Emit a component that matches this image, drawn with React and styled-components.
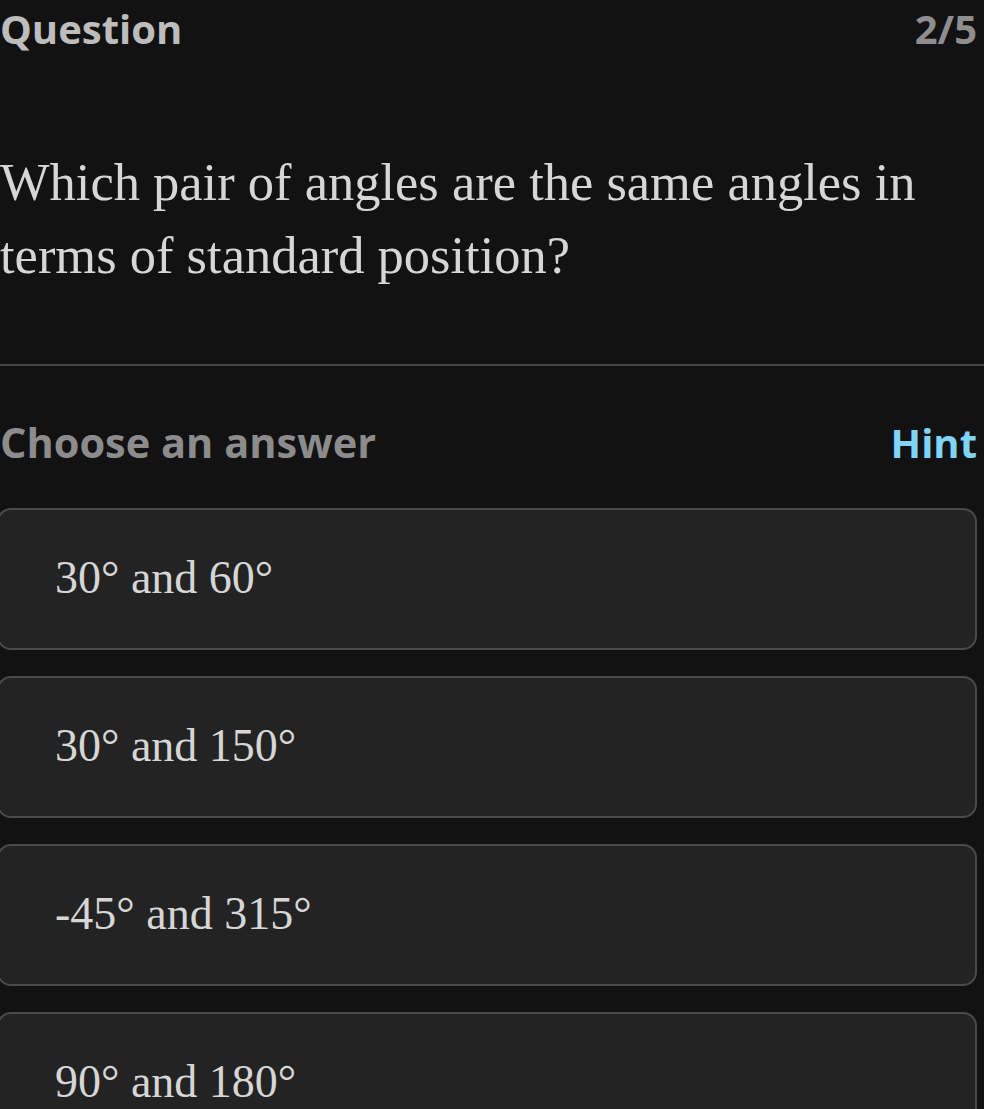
import React from "react";
import styled, { createGlobalStyle } from "styled-components";

const GlobalStyle = createGlobalStyle`
  html, body {
    margin: 0;
    padding: 0;
    background: #121212;
  }
  body {
    font-family: "Open Sans", "Noto Sans", sans-serif;
    overflow: hidden;
  }
`;

const options = [
  "30° and 60°",
  "30° and 150°",
  "-45° and 315°",
  "90° and 180°",
];

const App = () => {
  return (
    <>
      <GlobalStyle />
      <Page>
        <Header>
          <Title>Question</Title>
          <Counter>2/5</Counter>
        </Header>
        <Prompt>
          Which pair of angles are the same angles in terms of standard
          position?
        </Prompt>
        <Divider />
        <AnswerBar>
          <AnswerLabel>Choose an answer</AnswerLabel>
          <HintButton>Hint</HintButton>
        </AnswerBar>
        <OptionList>
          {options.map((option) => (
            <Option key={option}>{option}</Option>
          ))}
        </OptionList>
      </Page>
    </>
  );
};

const Page = styled.div`
  width: 984px;
  box-sizing: border-box;
  padding: 0 7px 0 0;
  display: flex;
  flex-direction: column;
`;

const Header = styled.div`
  display: flex;
  justify-content: space-between;
  align-items: center;
  height: 56px;
`;

const Title = styled.div`
  font-size: 40px;
  font-weight: 700;
  color: #bdbdbd;
`;

const Counter = styled.div`
  font-size: 40px;
  font-weight: 700;
  color: #8e8e8e;
`;

const Prompt = styled.div`
  margin-top: 90px;
  font-family: "Liberation Serif", "DejaVu Serif", serif;
  font-size: 52.5px;
  line-height: 73px;
  color: #d6d6d6;
  padding-right: 20px;
`;

const Divider = styled.div`
  margin: 72px -7px 0 0;
  height: 2px;
  background: #464646;
`;

const AnswerBar = styled.div`
  display: flex;
  justify-content: space-between;
  align-items: center;
  margin-top: 48px;
  height: 56px;
`;

const AnswerLabel = styled.div`
  font-size: 41.5px;
  font-weight: 700;
  color: #8c8c8c;
`;

const HintButton = styled.button`
  background: none;
  border: none;
  padding: 0;
  font-family: inherit;
  font-size: 40px;
  font-weight: 700;
  color: #7fd4f8;
`;

const OptionList = styled.div`
  display: flex;
  flex-direction: column;
  gap: 26px;
  margin-top: 38px;
  margin-left: -3px;
`;

const Option = styled.div`
  height: 142px;
  box-sizing: border-box;
  border: 2px solid #4a4a4a;
  border-radius: 14px;
  background: #232323;
  display: flex;
  align-items: center;
  padding: 0 0 4px 56px;
  font-family: "Liberation Serif", "DejaVu Serif", serif;
  font-size: 46px;
  color: #d6d6d6;
`;

export default App;
